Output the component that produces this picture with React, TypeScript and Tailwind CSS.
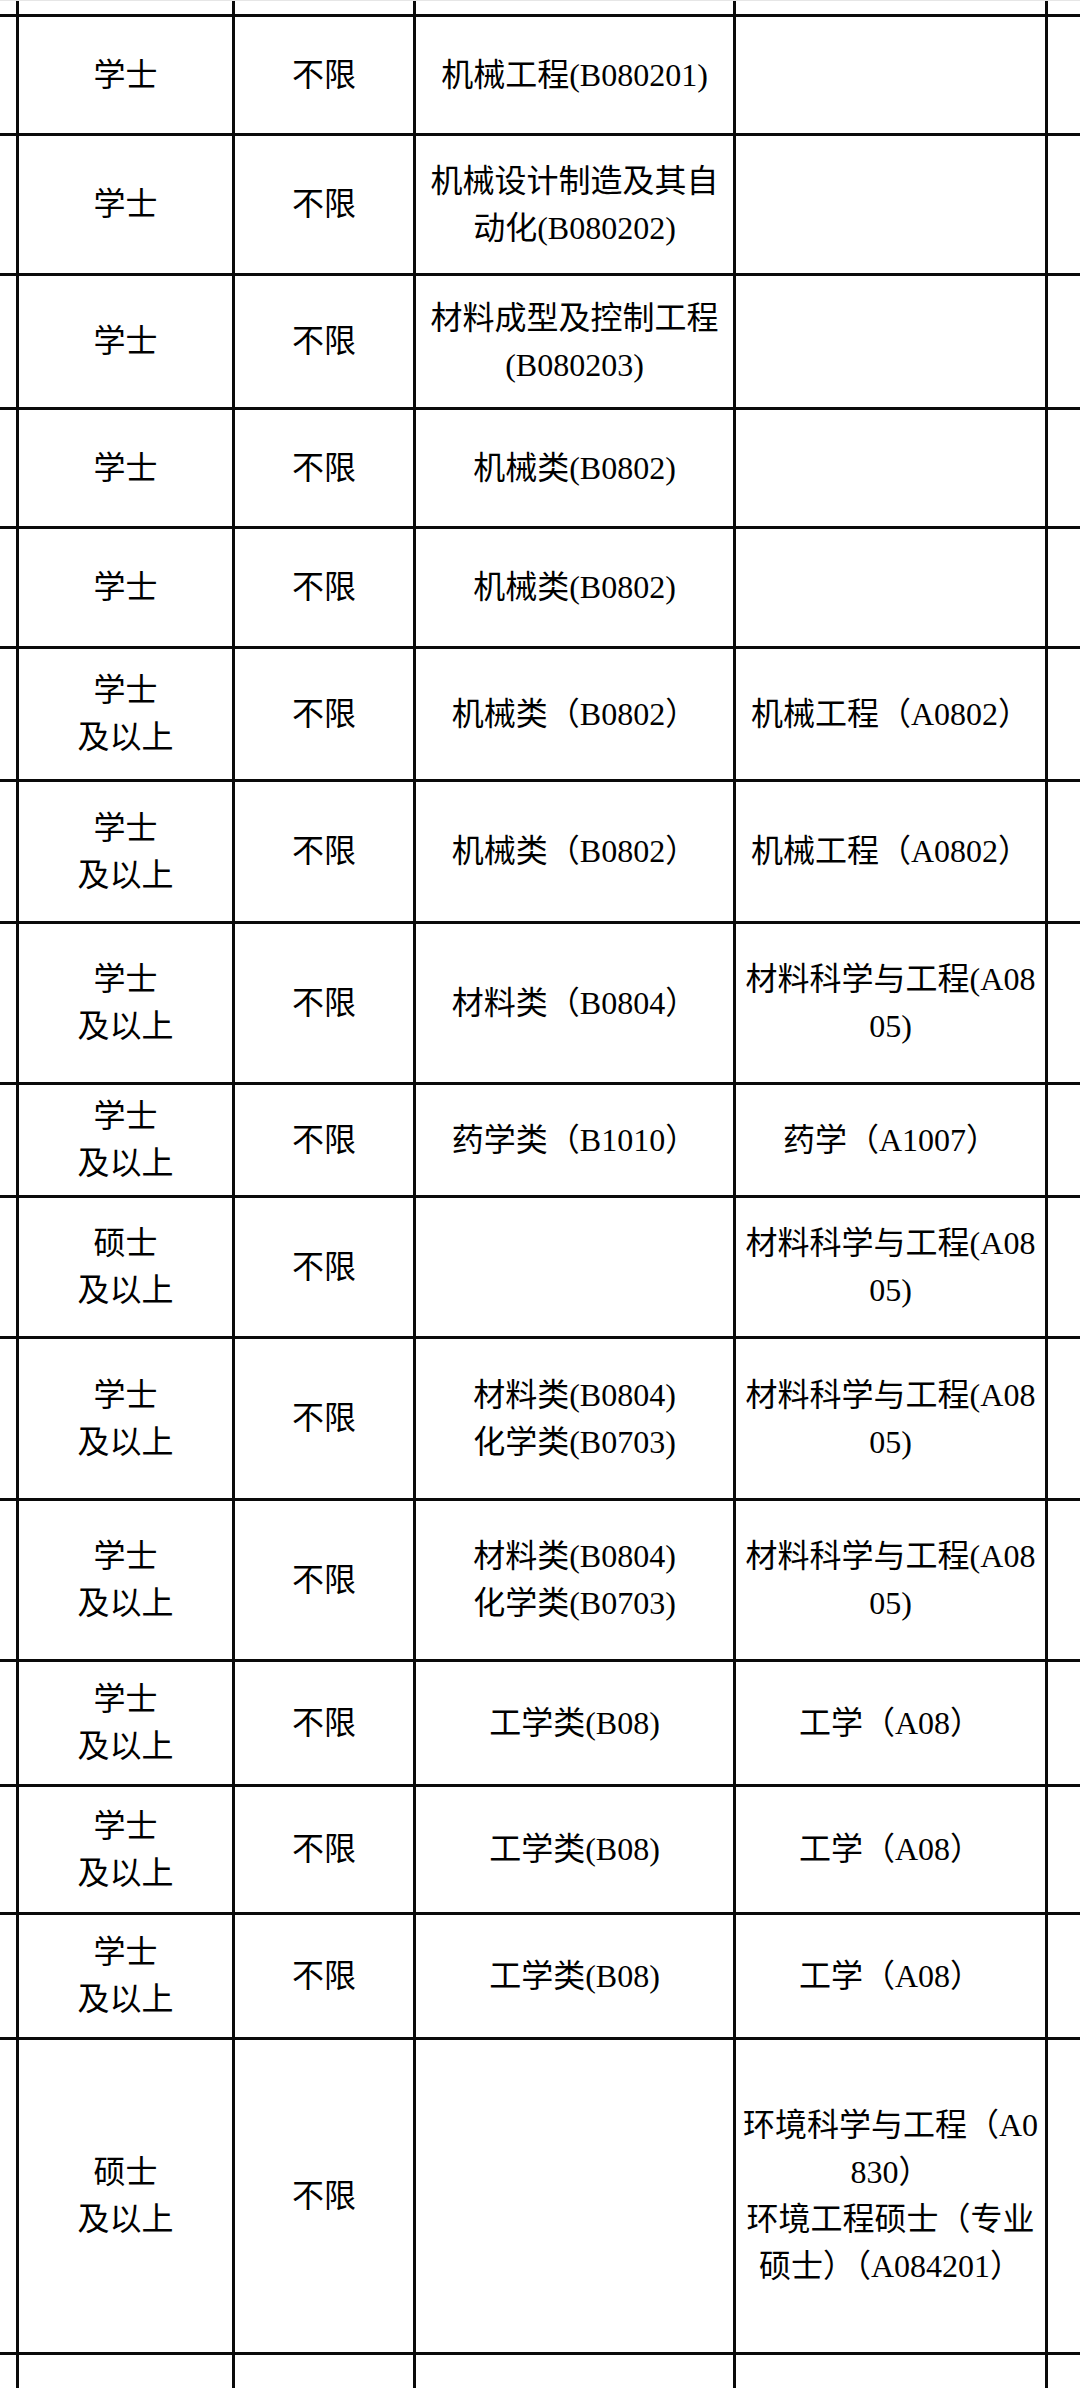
const COLS = ["w-[19px]", "w-[216px]", "w-[181px]", "w-[320px]", "w-[312px]", "flex-1"];

type Row = {
  h: string;
  cells: string[][];
};

const BS = ["学士"];
const BSP = ["学士", "及以上"];
const MSP = ["硕士", "及以上"];
const NL = ["不限"];
const MSE = ["材料科学与工程(A08", "05)"];

const ROWS: Row[] = [
  { h: "h-[16px]", cells: [[], [], [], [], [], []] },
  { h: "h-[119px]", cells: [[], BS, NL, ["机械工程(B080201)"], [], []] },
  { h: "h-[140px]", cells: [[], BS, NL, ["机械设计制造及其自", "动化(B080202)"], [], []] },
  { h: "h-[134px]", cells: [[], BS, NL, ["材料成型及控制工程", "(B080203)"], [], []] },
  { h: "h-[119px]", cells: [[], BS, NL, ["机械类(B0802)"], [], []] },
  { h: "h-[120px]", cells: [[], BS, NL, ["机械类(B0802)"], [], []] },
  { h: "h-[133px]", cells: [[], BSP, NL, ["机械类（B0802）"], ["机械工程（A0802）"], []] },
  { h: "h-[142px]", cells: [[], BSP, NL, ["机械类（B0802）"], ["机械工程（A0802）"], []] },
  { h: "h-[161px]", cells: [[], BSP, NL, ["材料类（B0804）"], MSE, []] },
  { h: "h-[113px]", cells: [[], BSP, NL, ["药学类（B1010）"], ["药学（A1007）"], []] },
  { h: "h-[141px]", cells: [[], MSP, NL, [], MSE, []] },
  { h: "h-[162px]", cells: [[], BSP, NL, ["材料类(B0804)", "化学类(B0703)"], MSE, []] },
  { h: "h-[161px]", cells: [[], BSP, NL, ["材料类(B0804)", "化学类(B0703)"], MSE, []] },
  { h: "h-[125px]", cells: [[], BSP, NL, ["工学类(B08)"], ["工学（A08）"], []] },
  { h: "h-[128px]", cells: [[], BSP, NL, ["工学类(B08)"], ["工学（A08）"], []] },
  { h: "h-[125px]", cells: [[], BSP, NL, ["工学类(B08)"], ["工学（A08）"], []] },
  {
    h: "h-[315px]",
    cells: [
      [],
      MSP,
      NL,
      [],
      ["环境科学与工程（A0", "830）", "环境工程硕士（专业", "硕士）（A084201）"],
      [],
    ],
  },
];

function Cell({ lines, col }: { lines: string[]; col: number }) {
  const last = col === COLS.length - 1;
  return (
    <div
      className={`${COLS[col]} shrink-0 flex flex-col items-center justify-center text-center ${
        last ? "" : "border-r-[3px] border-[#0a0a0a]"
      }`}
    >
      {lines.map((l, i) => (
        <div key={i} className="whitespace-nowrap">
          {l}
        </div>
      ))}
    </div>
  );
}

export default function App() {
  return (
    <div
      className="flex h-[2388px] w-[1080px] flex-col overflow-hidden border-t border-[#e6e6e6] bg-white text-[32px] leading-[47px] text-black"
      style={{ fontFamily: '"Liberation Serif", "Noto Sans CJK SC", serif' }}
    >
      {ROWS.map((r, i) => (
        <div key={i} className={`${r.h} flex shrink-0 border-b-[3px] border-[#0a0a0a]`}>
          {r.cells.map((c, j) => (
            <Cell key={j} lines={c} col={j} />
          ))}
        </div>
      ))}
      <div className="flex flex-1">
        {COLS.map((_, j) => (
          <Cell key={j} lines={[]} col={j} />
        ))}
      </div>
    </div>
  );
}
